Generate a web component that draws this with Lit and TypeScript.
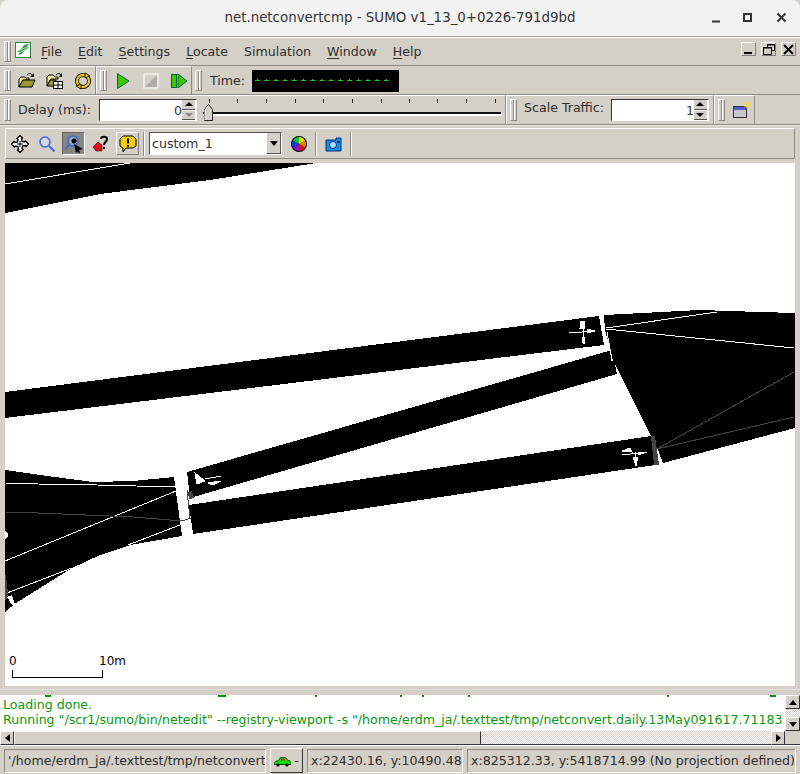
import { LitElement, html, css, svg } from "lit";
import { customElement } from "lit/decorators.js";

const grip = html`<span class="grip"></span>`;

const openIcon = html`<svg class="ic" viewBox="0 0 18 18"><path d="M1 15V7l2-2h4l1 1h3v2H5L1 15z" fill="#f3ee8a" stroke="#000" stroke-width="1"/><path d="M1 15l4-7h12l-3 7z" fill="#9a9a32" stroke="#000" stroke-width="1"/><path d="M9 3c2-2 4-2 5 0" fill="none" stroke="#000"/><path d="M16 1v4h-4z" fill="#000"/></svg>`;
const netIcon = html`<svg class="ic" viewBox="0 0 18 18"><path d="M1 14V5l2-2h4l2 2h3v2H5l-4 7z" fill="#f3ee8a" stroke="#000"/><path d="M1 14l3-6h6v6z" fill="#9a9a32" stroke="#000"/><rect x="7.500" y="9.500" width="9" height="7" fill="#fff" stroke="#000"/><path d="M7 13h10M12 9v8" stroke="#000"/><path d="M10 3c2-2 4-2 5 0" fill="none" stroke="#000"/><path d="M16 1v4h-3z" fill="#000"/></svg>`;
const reloadIcon = html`<svg class="ic" viewBox="0 0 18 18"><circle cx="9" cy="9" r="6" fill="none" stroke="#000" stroke-width="4"/><circle cx="9" cy="9" r="6" fill="none" stroke="#f0c020" stroke-width="2.400"/><path d="M11 1l5 3-5 2z" fill="#f0c020" stroke="#000" stroke-width=".8"/><path d="M7 17l-5-3 5-2z" fill="#f0c020" stroke="#000" stroke-width=".8"/></svg>`;
const playIcon = html`<svg class="ic" viewBox="0 0 18 18"><path d="M3.500 1.500v15L15 9z" fill="#3cc800" stroke="#064" stroke-width="1"/></svg>`;
const stopIcon = html`<svg class="ic" viewBox="0 0 18 18"><rect x="2" y="2" width="14" height="14" fill="#d4d0c8" stroke="#f4f2ee" stroke-width="1.400"/><path d="M15 3v12H3z" fill="#b0ada6"/></svg>`;
const stepIcon = html`<svg class="ic" viewBox="0 0 18 18"><rect x="1.500" y="2.500" width="5" height="13" fill="#3cc800" stroke="#064"/><path d="M8 2v14l9-7z" fill="#3cc800" stroke="#064"/></svg>`;
const moveIcon = html`<svg class="ic" viewBox="0 0 18 18"><path d="M9 .5l2.500 2.500-1 1 .5 2.500 2.500.5 1-1L17.500 9 15 11.500l-1-1-2.500.5-.5 2.500 1 1L9 17.500 6.500 15l1-1-.5-2.500-2.500-.5-1 1L.5 9 3 6.500l1 1 2.500-.5.500-2.500-1-1z" fill="#fff" stroke="#000" stroke-width="1.300"/><path d="M9 6v6M6 9h6" stroke="#000"/></svg>`;
const zoomIcon = html`<svg class="ic" viewBox="0 0 18 18"><circle cx="7" cy="7" r="5" fill="#d8d8e8" stroke="#3c68e0" stroke-width="1.600"/><path d="M11 11l5.500 5.500" stroke="#3c68e0" stroke-width="2"/></svg>`;
const locateIcon = html`<svg class="ic" viewBox="0 0 18 18"><circle cx="8" cy="6" r="5" fill="#9aa" stroke="#3c68e0" stroke-width="1.600"/><circle cx="9" cy="6" r="2.500" fill="#000"/><path d="M4 10l-3.500 4" stroke="#3c68e0" stroke-width="2"/><path d="M9 9l9 5-4 1 1 3-3-1-1 1z" fill="#000"/></svg>`;
const helpIcon = html`<svg class="ic" viewBox="0 0 18 18"><path d="M1 12l5-5 4 3v6H4z" fill="#e01018" stroke="#400" stroke-width=".6"/><path d="M9 4c0-3 6-3 6 0 0 3-3 3-3 6" fill="none" stroke="#000" stroke-width="2"/><rect x="11" y="12" width="2" height="2"/></svg>`;
const warnIcon = html`<svg class="ic" viewBox="0 0 18 18"><path d="M4 1h10l3 3v7l-3 2H7l-3 4v-4l-3-2V4z" fill="#f8d010" stroke="#000"/><rect x="8" y="3.500" width="2" height="5" fill="#000"/><rect x="8" y="10" width="2" height="1.600" fill="#000"/></svg>`;
const wheelIcon = html`<svg class="ic" viewBox="0 0 18 18"><circle cx="9" cy="9" r="8" fill="#000"/><path d="M9 9V2a7 7 0 0 1 6 3.500z" fill="#f0e000"/><path d="M9 9l6-3.500A7 7 0 0 1 15 12.500z" fill="#f08000"/><path d="M9 9l6 3.500A7 7 0 0 1 9 16z" fill="#e01010"/><path d="M9 9v7a7 7 0 0 1-6-3.500z" fill="#9010c0"/><path d="M9 9l-6 3.500A7 7 0 0 1 3 5.500z" fill="#1040e0"/><path d="M9 9L3 5.500A7 7 0 0 1 9 2z" fill="#10c040"/></svg>`;
const cameraIcon = html`<svg class="ic" viewBox="0 0 18 18"><path d="M1 5h10V3h5v13H1z" fill="#1090e0" stroke="#003080"/><circle cx="8" cy="10" r="3.500" fill="#b0e0ff" stroke="#003080"/><rect x="12" y="6" width="3" height="2" fill="#003080"/></svg>`;
const newViewIcon = html`<svg class="ic" viewBox="0 0 18 18"><rect x="1.500" y="5.500" width="13" height="11" fill="#c8c8c8" stroke="#333"/><rect x="2" y="6" width="12" height="3" fill="#5058d8"/><path d="M14 0l1 2 2-1-1 2.500 2 1-2.500.5L15 8l-1-2.500-2 .5 1.500-2z" fill="#f8e000"/></svg>`;
const carIcon = html`<svg width="17" height="12" viewBox="0 0 17 12"><path d="M.5 8.500c0-2 2-2.500 4-3l2-3h5l2.500 3c2 0 3 1 3 3v1H.5z" fill="#10e010" stroke="#050"/><rect x="7" y="3.500" width="4" height="2" fill="#c03020"/><circle cx="4" cy="10" r="1.600" fill="#000"/><circle cx="13" cy="10" r="1.600" fill="#000"/></svg>`;
const logo = html`<svg width="16" height="16" viewBox="0 0 16 16"><rect x=".5" y=".5" width="15" height="15" fill="#fff" stroke="#2a8a3a"/><path d="M2 10l5-4 2-3 5-1-2 3 2 1-5 3-2 3-4 1 2-3z" fill="#3a9a4a"/><path d="M3 9l9-4M4 11l9-5" stroke="#a8d8b0"/></svg>`;

const ticks = [209, 237, 266, 295, 323, 352, 381, 409, 437, 466, 495];
const dashes = Array.from({ length: 15 }, (_, i) => i);

function spinner() {
  return html`<span class="spin"><span class="spinbtn"><i class="up"></i></span><span class="spinbtn"><i class="down"></i></span></span>`;
}

@customElement("road-canvas")
class RoadCanvas extends LitElement {
  static styles = css`
    :host { display: block; width: 790px; height: 523px; background: #fff; }
    svg { display: block; }
    text { font-family: "DejaVu Sans", sans-serif; font-size: 12px; fill: #000; }
  `;
  render() {
    return html`<svg width="790" height="523" viewBox="5 163 790 523" shape-rendering="crispEdges">
      ${svg`
      <g fill="#000">
        <polygon points="5,163 316,163 210,180 100,194 5,213"/>
        <polygon points="5,392 599,316 604,345 5,418"/>
        <polygon points="187,472 612,350 617,374 190,498"/>
        <polygon points="189,505 651,436 655,465 193,534"/>
        <polygon points="604,315 700,310 760,312 795,313 795,428 663,463 658,450 651,436 613,360 605,330"/>
        <polygon points="5,470 40,475 93,482 133,481 174,477 182,536 130,545 100,555 72,568 16,603 5,612"/>
      </g>
      <g fill="none" stroke="#fff" stroke-width="1">
        <polyline points="5,184 130,163"/>
        <polyline points="5,483 38,484 97,485 175,487"/>
        <polyline points="5,561 176,491"/>
        <polyline points="7,593 72,568"/>
        <polyline points="128,545 180,525"/>
        <polyline points="606,328 717,312"/>
        <polyline points="606,329 794,348"/>
        <polyline points="607,332 612,360"/>
      </g>
      <g fill="none" stroke="#444" stroke-width="1">
        <polyline points="5,512 38,513 133,517 182,521 191,518"/>
        <polyline points="187,490 190,519"/>
        <polyline points="5,575 7,598"/>
        <polyline points="657,449 794,372"/>
        <polyline points="657,449 794,417"/>
      </g>
      <polygon points="651,436 655,436 659,465 654,465" fill="#444"/>
      <polygon points="188,492 192,491 194,498 189,499" fill="#444"/>
      <polygon points="5,580 7,580 8,598 5,600" fill="#444"/>
      <polygon points="7,597 12,595 15,604 12,605" fill="#fff"/>
      <circle cx="4" cy="535" r="4" fill="#fff"/>
      <circle cx="612" cy="360" r="1.500" fill="#fff"/>
      <g fill="#fff" stroke="#fff" stroke-width="1">
        <polyline points="569,333 595,331" fill="none"/>
        <polyline points="583,328 583,337" fill="none"/>
        <polygon points="581,321 584,321 584,328 580,328"/>
        <polygon points="582,337 585,337 584,344 583,343"/>
        <polygon points="587,329 595,331 587,333"/>
        <polyline points="622,455 647,452" fill="none"/>
        <polyline points="635,452 636,465" fill="none"/>
        <polygon points="622,451 630,448 632,452"/>
        <polygon points="633,457 638,457 636,466"/>
        <polygon points="638,453 647,452 638,455"/>
        <polygon points="195,473 205,481 197,484"/>
        <polyline points="205,479 221,476" fill="none"/>
        <polygon points="208,483 221,481 213,485"/>
      </g>
      <polyline points="12.500,670 12.500,677.500 102.500,677.500 102.500,670" fill="none" stroke="#000" stroke-width="1"/>
      <text x="9" y="665">0</text>
      <text x="99" y="665">10m</text>
      `}
    </svg>`;
  }
}

@customElement("app-root")
class AppRoot extends LitElement {
  static styles = css`
    :host { display: block; width: 800px; height: 774px; background: #d4d0c8; overflow: hidden;
      font-family: "DejaVu Sans", sans-serif; font-size: 12.600px; color: #2e2e2e; }
    * { box-sizing: border-box; }
    .title { height: 37px; background: #f2f2f2; border-radius: 8px 8px 0 0; border-bottom: 1px solid #a8a59e;
      display: flex; align-items: center; justify-content: center; position: relative;
      font-size: 13.400px; color: #333; padding-bottom: 1px; }
    .wm { position: absolute; top: 11px; width: 14px; height: 14px; }
    .wm svg { display: block; }
    .wm.a { left: 710px; } .wm.b { left: 741px; } .wm.c { left: 775px; }
    .bar { display: flex; align-items: stretch; background: #d4d0c8; border-bottom: 1px solid #8e8b84; }
    .menu { height: 29px; border-top: 1px solid #fff; padding-left: 4px; align-items: center; position: relative; }
    .menu .logo { margin: 0 0 4px 4px; display: block; height: 16px; }
    .menu .items { display: flex; gap: 16px; margin-left: 10px; color: #2e2e2e; }
    .menu u { text-decoration-thickness: 1px; text-underline-offset: 2px; }
    .mdi { margin-left: auto; margin-right: 4px; display: flex; gap: 5px; align-self: flex-start; margin-top: 4px; }
    .mdibtn { width: 15px; height: 14px; border: 1px solid; border-color: #fff #808080 #808080 #fff; display: flex; align-items: center; justify-content: center; }
    .grip { width: 7px; align-self: stretch; margin: 3px 0; flex: none; border: 1px solid; border-color: #fff #8e8b84 #8e8b84 #fff;
      background: linear-gradient(90deg, transparent 2px, #8e8b84 2px, #8e8b84 3px, #fff 3px, #fff 4px, transparent 4px); }
    .row2 { height: 29px; }
    .seg { display: flex; align-items: center; border-top: 1px solid #fff; border-left: 1px solid #fff; border-right: 1px solid #8e8b84; padding-left: 3px; flex: none; }
    .seg.first { border-left: none; padding-left: 4px; }
    .seg.tail { border: none; border-top: 1px solid #d4d0c8; flex: 1; background: #d4d0c8; }
    .btns { display: flex; align-items: center; gap: 10px; margin-left: 7px; }
    .ic { width: 18px; height: 18px; display: block; flex: none; }
    .time { margin: 0 0 0 8px; display: flex; align-items: center; gap: 7px; }
    .lcd { width: 147px; height: 22px; background: #000; display: block; }
    .row3 { height: 30px; }
    .lab { margin-left: 7px; white-space: nowrap; padding-bottom: 1px; }
    .lab.hi { padding-bottom: 5px; }
    .spinbox { width: 98px; height: 22px; background: #fff; border: 1px solid; border-color: #333 #fff #fff #333;
      display: flex; justify-content: flex-end; align-items: center; position: relative; padding-right: 14px; color: #333; flex: none; }
    .spin { position: absolute; right: 1px; top: 0; bottom: 0; width: 13px; display: flex; flex-direction: column; gap: 1px; }
    .spinbtn { flex: 1; background: #d4d0c8; display: flex; align-items: center; justify-content: center; border-bottom: 1px solid #555; }
    .spinbtn i { width: 0; height: 0; border-left: 4px solid transparent; border-right: 4px solid transparent; }
    .up { border-bottom: 4px solid #000; }
    .down { border-top: 4px solid #000; }
    .dis .down { border-top-color: #888; }
    .slider { width: 303px; flex: none; margin-left: 4px; position: relative; }
    .slider svg { display: block; }
    .view { height: 38px; border-top: 1px solid #e8e6e0; padding: 2px 5px 0; }
    .tb { height: 31px; border: 1px solid; border-color: #fff #8e8b84 #8e8b84 #fff; display: flex; align-items: center; padding-left: 1px; }
    .tbtn { width: 23px; height: 23px; display: flex; align-items: center; justify-content: center; margin-right: 4px; flex: none; }
    .tbtn.on { background: #888680; border: 1px solid; border-color: #666 #fff #fff #666; }
    .tbtn.raised { border: 1px solid; border-color: #fff #808080 #808080 #fff; }
    .sep { width: 2px; height: 24px; flex: none; border-left: 1px solid #8e8b84; border-right: 1px solid #fff; }
    .combo { width: 133px; height: 23px; margin-left: 4px; background: #fff; border: 1px solid; border-color: #555 #fff #fff #555;
      display: flex; align-items: center; padding-left: 2px; position: relative; flex: none; color: #333; }
    .drop { position: absolute; right: 0; top: 0; bottom: 0; width: 15px; background: #d4d0c8; border-left: 1px solid #fff; border-bottom: 1px solid #555; border-right: 1px solid #555;
      display: flex; align-items: center; justify-content: center; }
    .drop i { width: 0; height: 0; border-left: 4px solid transparent; border-right: 4px solid transparent; border-top: 5px solid #000; }
    .canvasWrap { padding: 0 5px; height: 526px; border-bottom: 3px solid #d4d0c8; }
    .gapline { height: 6px; background: #d4d0c8; border-top: 1px solid #ddd; }
    .logwrap { height: 36px; display: flex; position: relative; }
    .log { flex: 1; min-width: 0; background: #fff; color: #0a980f; padding: 2px 0 0 3px; overflow: hidden; position: relative; white-space: nowrap; line-height: 15px; height: 36px; }
    .marks { position: absolute; left: 0; top: 0; display: block; }
    .vs { width: 15px; flex: none; display: flex; flex-direction: column; justify-content: space-between;
      background: repeating-conic-gradient(#d4d0c8 0 25%, #fff 0 50%) 0 0 / 2px 2px; }
    .sbtn { background: #d4d0c8; border: 1px solid; border-color: #fff #333 #333 #fff; display: flex; align-items: center; justify-content: center; flex: none; }
    .vs .sbtn { height: 14px; }
    .hs { height: 14px; display: flex; border-bottom: 1px solid #333; }
    .hs .sbtn { width: 14px; height: 14px; }
    .thumb { width: 467px; height: 14px; background: #d4d0c8; border: 1px solid; border-color: #fff #333 #333 #fff; flex: none; }
    .track { flex: 1; background: repeating-conic-gradient(#d4d0c8 0 25%, #fff 0 50%) 0 0 / 2px 2px; }
    .corner { width: 15px; flex: none; background: #d4d0c8; }
    .tri-l { width: 0; height: 0; border-top: 4px solid transparent; border-bottom: 4px solid transparent; border-right: 5px solid #000; }
    .tri-r { width: 0; height: 0; border-top: 4px solid transparent; border-bottom: 4px solid transparent; border-left: 5px solid #000; }
    .tri-u { width: 0; height: 0; border-left: 4px solid transparent; border-right: 4px solid transparent; border-bottom: 5px solid #000; }
    .tri-d { width: 0; height: 0; border-left: 4px solid transparent; border-right: 4px solid transparent; border-top: 5px solid #000; }
    .status { height: 30px; display: flex; align-items: center; padding: 0 4px; gap: 4px; border-top: 1px solid #fff; }
    .fld { height: 24px; border: 1px solid; border-color: #8e8b84 #fff #fff #8e8b84; display: flex; align-items: center; padding-left: 3px; overflow: hidden; white-space: nowrap; flex: none; color: #2e2e2e; }
    .f1 { width: 262px; } .f2 { width: 156px; } .f3 { width: 329px; }
    .carbtn { width: 33px; height: 25px; border: 1px solid; border-color: #fff #333 #333 #fff; display: flex; align-items: center; justify-content: center; gap: 3px; flex: none; }
  `;

  render() {
    return html`
      <div class="title">net.netconvertcmp - SUMO v1_13_0+0226-791d9bd
        <span class="wm a"><svg width="14" height="14"><path d="M2 10.500h8" stroke="#333" stroke-width="2"/></svg></span>
        <span class="wm b"><svg width="14" height="14"><rect x="3" y="3" width="7" height="7" fill="none" stroke="#333" stroke-width="2"/></svg></span>
        <span class="wm c"><svg width="14" height="14"><path d="M2.500 2.500l8 8M10.500 2.500l-8 8" stroke="#333" stroke-width="2"/></svg></span>
      </div>
      <div class="bar menu">
        ${grip}
        <span class="logo">${logo}</span>
        <span class="items">
          <span><u>F</u>ile</span><span><u>E</u>dit</span><span><u>S</u>ettings</span><span><u>L</u>ocate</span><span>Simulation</span><span><u>W</u>indow</span><span><u>H</u>elp</span>
        </span>
        <span class="mdi">
          <span class="mdibtn"><svg width="11" height="11"><path d="M1 9h8" stroke="#000" stroke-width="2"/></svg></span>
          <span class="mdibtn"><svg width="12" height="11"><path d="M4.500 3V.5h7v6H9M.5 3.500h8v7h-8z" fill="none" stroke="#000"/><path d="M4 1h8M0 4h9" stroke="#000"/></svg></span>
          <span class="mdibtn"><svg width="11" height="11"><path d="M1 1l9 9M10 1l-9 9" stroke="#000" stroke-width="2"/></svg></span>
        </span>
      </div>
      <div class="bar row2">
        <div class="seg first" style="width:96px">${grip}<span class="btns">${openIcon}${netIcon}${reloadIcon}</span></div>
        <div class="seg" style="width:96px">${grip}<span class="btns">${playIcon}${stopIcon}${stepIcon}</span></div>
        <div class="seg tail">${grip}
          <span class="time"><span>Time:</span>
            <svg class="lcd" viewBox="0 0 147 22">
              ${dashes.map((i) => svg`<rect x=${3 + i * 9.2} y="10" width="5" height="1" fill="#16d016"/><rect x=${5 + i * 9.2} y="9" width="1" height="1" fill="#22ee22"/>`)}
            </svg>
          </span>
        </div>
      </div>
      <div class="bar row3">
        <div class="seg first" style="width:506px">${grip}
          <span class="lab">Delay (ms):</span>
          <span class="spinbox" style="margin-left:8px">0<span class="dis">${spinner()}</span></span>
          <span class="slider">
            <svg width="303" height="29" viewBox="201 95 303 29">
              ${ticks.map((x) => svg`<rect x=${x} y="98" width="1" height="4" fill="#222"/>`)}
              <rect x="203" y="111" width="299" height="4" fill="#fff"/>
              <rect x="203" y="111" width="298" height="2" fill="#111"/>
              <path d="M204.500 119.500v-11l4-5 4 5v11z" fill="#d4d0c8" stroke="#222"/>
              <path d="M205 119v-10l3.500-4.500" fill="none" stroke="#fff"/>
            </svg>
          </span>
        </div>
        <div class="seg" style="width:208px">${grip}
          <span class="lab hi">Scale Traffic:</span>
          <span class="spinbox" style="margin-left:7px">1${spinner()}</span>
        </div>
        <div class="seg" style="width:41px">${grip}<span style="margin-left:7px">${newViewIcon}</span></div>
      </div>
      <div class="view">
        <div class="tb">
          <span class="tbtn" style="margin-left:1px">${moveIcon}</span>
          <span class="tbtn">${zoomIcon}</span>
          <span class="tbtn on">${locateIcon}</span>
          <span class="tbtn">${helpIcon}</span>
          <span class="tbtn raised">${warnIcon}</span>
          <span class="sep"></span>
          <span class="combo">custom_1<span class="drop"><i></i></span></span>
          <span class="tbtn" style="margin-left:5px;margin-right:5px">${wheelIcon}</span>
          <span class="sep"></span>
          <span class="tbtn" style="margin-left:5px;margin-right:5px">${cameraIcon}</span>
          <span class="sep"></span>
        </div>
      </div>
      <div class="canvasWrap"><road-canvas></road-canvas></div>
      <div class="gapline"></div>
      <div class="logwrap">
        <div class="log">
          <svg class="marks" width="785" height="3">
            ${[[45, 6], [218, 8], [315, 2], [400, 2], [422, 2], [468, 2], [667, 2], [770, 6]].map(([x, w]) => svg`<rect x=${x} y="0" width=${w} height="2" fill="#0a980f"/>`)}
          </svg>
          <div>Loading done.</div>
          <div>Running "/scr1/sumo/bin/netedit" --registry-viewport -s "/home/erdm_ja/.texttest/tmp/netconvert.daily.13May091617.71183</div>
        </div>
        <div class="vs">
          <span class="sbtn"><i class="tri-u"></i></span>
          <span class="sbtn"><i class="tri-d"></i></span>
        </div>
      </div>
      <div class="hs">
        <span class="sbtn"><i class="tri-l"></i></span>
        <span class="thumb"></span>
        <span class="track"></span>
        <span class="sbtn"><i class="tri-r"></i></span>
        <span class="corner"></span>
      </div>
      <div class="status">
        <span class="fld f1">'/home/erdm_ja/.texttest/tmp/netconvert</span>
        <span class="carbtn">${carIcon}<span>-</span></span>
        <span class="fld f2">x:22430.16, y:10490.48</span>
        <span class="fld f3">x:825312.33, y:5418714.99 (No projection defined)</span>
      </div>
    `;
  }
}
void RoadCanvas; void AppRoot;
